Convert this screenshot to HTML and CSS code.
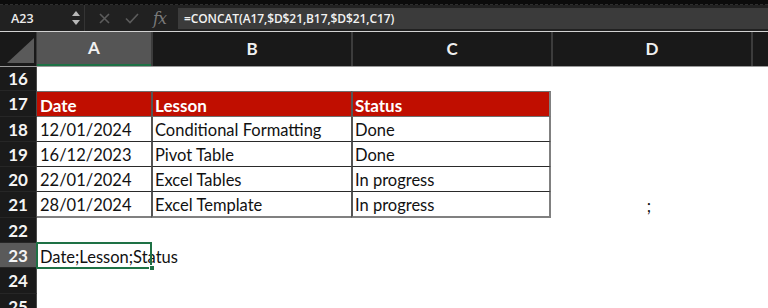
FILE: index.html
```html
<!DOCTYPE html>
<html>
<head>
<meta charset="utf-8">
<link rel="stylesheet" href="styles.css">
</head>
<body>
<div class="app">
  <div class="topstrip"></div>
  <div class="fbar">
    <div class="namebox">A23</div>
    <div class="spin">
      <svg width="10" height="16" viewBox="0 0 10 16"><path d="M5 1 L9 6 L1 6 Z" fill="#b8b8b8"/><path d="M1 10 L9 10 L5 15 Z" fill="#b8b8b8"/></svg>
    </div>
    <div class="sep"></div>
    <div class="tools">
      <svg class="ico-x" width="11" height="11" viewBox="0 0 11 11"><path d="M1 1 L10 10 M10 1 L1 10" stroke="#5c5c5c" stroke-width="1.6" fill="none"/></svg>
      <svg class="ico-ok" width="14" height="11" viewBox="0 0 14 11"><path d="M1 5.5 L5 9.5 L13 1" stroke="#5c5c5c" stroke-width="1.6" fill="none"/></svg>
      <span class="fx">fx</span>
    </div>
    <div class="finput">=CONCAT(A17,$D$21,B17,$D$21,C17)</div>
  </div>
  <div class="fline"></div>
  <div class="colhdr">
    <div class="corner"><svg width="36" height="32" viewBox="0 0 36 32"><path d="M7 30 L34 5 L34 30 Z" fill="#5a5a5a"/></svg></div>
    <div class="ch sel">A</div>
    <div class="ch">B</div>
    <div class="ch">C</div>
    <div class="ch">D</div>
    <div class="ch"></div>
  </div>
  <div class="sheet">
    <div class="rh">16</div><div class="c"></div><div class="c"></div><div class="c"></div><div class="c"></div><div class="c"></div>

    <div class="rh">17</div>
    <div class="c t th ta">Date</div><div class="c t th tb">Lesson</div><div class="c t th tc">Status</div><div class="c"></div><div class="c"></div>

    <div class="rh">18</div>
    <div class="c t ta">12/01/2024</div><div class="c t tb">Conditional Formatting</div><div class="c t tc">Done</div><div class="c"></div><div class="c"></div>

    <div class="rh">19</div>
    <div class="c t ta">16/12/2023</div><div class="c t tb">Pivot Table</div><div class="c t tc">Done</div><div class="c"></div><div class="c"></div>

    <div class="rh">20</div>
    <div class="c t ta">22/01/2024</div><div class="c t tb">Excel Tables</div><div class="c t tc">In progress</div><div class="c"></div><div class="c"></div>

    <div class="rh">21</div>
    <div class="c t tl ta">28/01/2024</div><div class="c t tl tb">Excel Template</div><div class="c t tl tc">In progress</div><div class="c cd">;</div><div class="c"></div>

    <div class="rh">22</div><div class="c"></div><div class="c"></div><div class="c"></div><div class="c"></div><div class="c"></div>

    <div class="rh rsel">23</div>
    <div class="c active"><span class="val">Date;Lesson;Status</span><div class="selbox"></div><div class="handle"></div></div><div class="c"></div><div class="c"></div><div class="c"></div><div class="c"></div>

    <div class="rh">24</div><div class="c"></div><div class="c"></div><div class="c"></div><div class="c"></div><div class="c"></div>

    <div class="rh">25</div><div class="c"></div><div class="c"></div><div class="c"></div><div class="c"></div><div class="c"></div>
  </div>
</div>
</body>
</html>
```

FILE: styles.css
```css
* { box-sizing: border-box; }
html, body { margin: 0; padding: 0; background: #ffffff; }
body { width: 768px; height: 308px; overflow: hidden; font-family: "Lato", "Open Sans", sans-serif; }

.topstrip { height: 5px; background: #0c0c0c; border-bottom: 1px dashed #2e2e2e; }

.fbar { height: 26px; background: #212121; display: flex; align-items: center; }
.namebox { width: 68px; padding-left: 11px; color: #ececec; font-family: "Open Sans", sans-serif; font-weight: 600; font-size: 12.5px; }
.spin { width: 16px; display: flex; justify-content: center; align-items: center; }
.sep { width: 1px; height: 100%; background: #343434; }
.tools { width: 93px; display: flex; align-items: center; height: 100%; }
.ico-x { margin-left: 14px; }
.ico-ok { margin-left: 15px; }
.fx { margin-left: 14px; font-family: "DejaVu Serif", "Liberation Serif", serif; font-style: italic; font-size: 16px; color: #7a7a7a; letter-spacing: -1px; }
.finput { flex: 1; height: 21px; margin-top: 1px; background: #3b3b3b; color: #f2f2f2; padding-left: 6px; display: flex; align-items: center; font-family: "Open Sans", sans-serif; font-weight: 600; font-size: 12px; letter-spacing: -0.1px; }

.fline { height: 1px; background: #d2d2d2; }

.colhdr { display: grid; grid-template-columns: 37px 114px 200px 200px 200px 1fr; height: 35px; background: #191919; border-bottom: 1px solid #9a9a9a; }
.corner { border-right: 1px solid #3a3a3a; display: flex; align-items: flex-end; padding-bottom: 1px; }
.ch { color: #f0f0f0; font-size: 17px; font-weight: 700; display: flex; align-items: center; justify-content: center; border-left: 2px solid #3c3c3c; padding-bottom: 2px; }
.ch.sel { background: #555555; border-left: none; border-bottom: 2px solid #1e7145; }

.sheet { display: grid; grid-template-columns: 37px 114px 200px 200px 200px 1fr; grid-template-rows: 24px 26px 25px 25px 25px 26px 25px 25px 26px 25px; }
.rh { background: #1a1a1a; color: #f4f4f4; font-weight: 700; font-size: 17px; display: flex; align-items: center; justify-content: center; border-right: 1px solid #4a4a4a; border-bottom: 1px solid #262626; }
.rh.rsel { background: #5a5a5a; }
.c { font-size: 16.5px; color: #111; display: flex; align-items: center; white-space: nowrap; padding-left: 3px; padding-top: 2px; position: relative; }
.t { border-bottom: 1px solid #2a2a2a; }
.th { background: #c00e00; color: #ffffff; font-weight: 700; font-size: 17px; border-top: 1px solid #6f6f6f; border-bottom: 1px solid #6f6f6f; }
.tb, .tc { border-left: 2px solid #555555; padding-left: 2px; }
.tc { border-right: 2px solid #808080; }
.tl { border-bottom: 2px solid #808080; }
.cd { justify-content: center; padding-left: 0; padding-right: 4px; }
.active { overflow: visible; }
.val { position: relative; z-index: 1; }
.selbox { position: absolute; left: -1px; top: -1px; width: 116px; height: 27px; border: 2px solid #1e7145; z-index: 2; }
.handle { position: absolute; left: 112px; top: 22px; width: 6px; height: 6px; background: #1e7145; border: 1px solid #ffffff; z-index: 3; }
```
